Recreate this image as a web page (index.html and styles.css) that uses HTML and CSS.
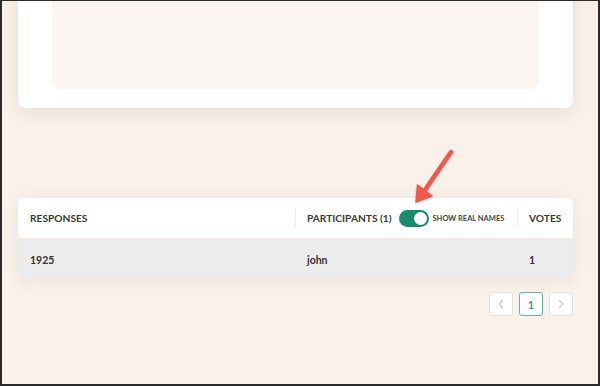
FILE: index.html
```html
<!DOCTYPE HTML>
<html>
<head>
    <title>Poll Results</title>
    <meta name="viewport" content="width=device-width, initial-scale=1">
    <link rel="stylesheet" href="styles.css">
</head>

<body>
    <div class="screen">

        <!--question card-------------------------------------------------->
        <div class="card">
            <div class="panel"></div>
        </div>

        <!--results table-------------------------------------------------->
        <div class="results">
            <div class="row head">
                <div class="cell">
                    <div class="th">RESPONSES</div>
                </div>
                <div class="cell">
                    <div class="th divided">
                        PARTICIPANTS (1)
                        <span class="toggle on"><span class="knob"></span></span>
                        <span class="toggle-label">SHOW REAL NAMES</span>
                    </div>
                </div>
                <div class="cell">
                    <div class="th divided">VOTES</div>
                </div>
            </div>
            <div class="row body-row">
                <div class="cell td">1925</div>
                <div class="cell td">john</div>
                <div class="cell td">1</div>
            </div>
        </div>

        <div class="pager">
            <button class="page-btn">
                <svg width="8" height="10" viewBox="0 0 8 10"><path d="M6 1 L2 5 L6 9" fill="none" stroke="#c9c9c9" stroke-width="1.1"/></svg>
            </button>
            <button class="page-btn active">1</button>
            <button class="page-btn">
                <svg width="8" height="10" viewBox="0 0 8 10"><path d="M2 1 L6 5 L2 9" fill="none" stroke="#c9c9c9" stroke-width="1.1"/></svg>
            </button>
        </div>

        <!--annotation arrow-->
        <svg class="callout" width="600" height="386" viewBox="0 0 600 386">
            <defs>
                <filter id="soft" x="-20%" y="-20%" width="140%" height="140%">
                    <feDropShadow dx="0" dy="1" stdDeviation="1.2" flood-color="#000" flood-opacity="0.25"/>
                </filter>
            </defs>
            <g filter="url(#soft)" fill="#ec5a4c" stroke="#ec5a4c">
                <line x1="451" y1="152" x2="425" y2="190" stroke-width="4.5" stroke-linecap="round"/>
                <polygon points="416,202 417.5,185 432,196" stroke-width="1.5" stroke-linejoin="round"/>
            </g>
        </svg>
    </div>
</body>

</html>
```

FILE: styles.css
```css
html, body {
    margin: 0;
    padding: 0;
}

body {
    font-family: "Lato", "Liberation Sans", sans-serif;
    color: #333;
}

.screen {
    position: relative;
    width: 600px;
    height: 386px;
    box-sizing: border-box;
    border: solid #2b2b2b;
    border-width: 1px 2px 2px 2px;
    background-color: #f9f1ea;
    overflow: hidden;
}

.card {
    margin: -32px 25px 0 16px;
    padding: 0 34px 19px 34px;
    background-color: #fff;
    border-radius: 8px;
    box-shadow: 0 3px 18px rgba(140, 110, 80, 0.16);
}

.panel {
    height: 120px;
    background-color: #faf5f0;
    border-radius: 8px;
}

.results {
    margin: 90px 25px 0 16px;
    border-radius: 6px;
    box-shadow: 0 2px 14px rgba(140, 110, 80, 0.10);
}

.row {
    display: grid;
    grid-template-columns: 277px 222px 1fr;
}

.head {
    height: 40px;
    background-color: #fff;
    border-bottom: 2px solid #f5e7e1;
    border-radius: 6px 6px 0 0;
}

.head .cell {
    display: flex;
    align-items: center;
}

.th {
    display: flex;
    align-items: center;
    height: 18px;
    padding-left: 12px;
    font-size: 10.2px;
    font-weight: 700;
    color: #3a3a3a;
    white-space: nowrap;
}

.th.divided {
    border-left: 1px solid #eeeeee;
    padding-left: 11px;
}

.toggle {
    display: inline-flex;
    align-items: center;
    box-sizing: border-box;
    width: 30px;
    height: 17px;
    margin-left: 7px;
    padding: 2px;
    border-radius: 9px;
    background-color: #ccc;
}

.toggle.on {
    background-color: #178b6d;
    justify-content: flex-end;
}

.knob {
    width: 13px;
    height: 13px;
    border-radius: 50%;
    background-color: #fff;
}

.toggle-label {
    margin-left: 4px;
    font-size: 7.5px;
    font-weight: 700;
    color: #444;
}

.body-row {
    height: 39px;
    background-color: #ececec;
    border-radius: 0 0 6px 6px;
}

.td {
    display: flex;
    align-items: center;
    padding-left: 12px;
    font-size: 10.5px;
    font-weight: 700;
    color: #333;
}

.pager {
    display: flex;
    justify-content: flex-end;
    gap: 6px;
    margin: 13px 25px 0 0;
}

.page-btn {
    display: flex;
    align-items: center;
    justify-content: center;
    width: 24px;
    height: 24px;
    padding: 0;
    box-sizing: border-box;
    border: 1px solid #e2e2e2;
    border-radius: 3px;
    background-color: #fff;
    font-family: "Lato", "Liberation Sans", sans-serif;
}

.page-btn.active {
    border-color: #63b6a2;
    color: #3f9c86;
    font-size: 11px;
    font-weight: 700;
}

.callout {
    position: absolute;
    top: -1px;
    left: -2px;
    pointer-events: none;
}
```
